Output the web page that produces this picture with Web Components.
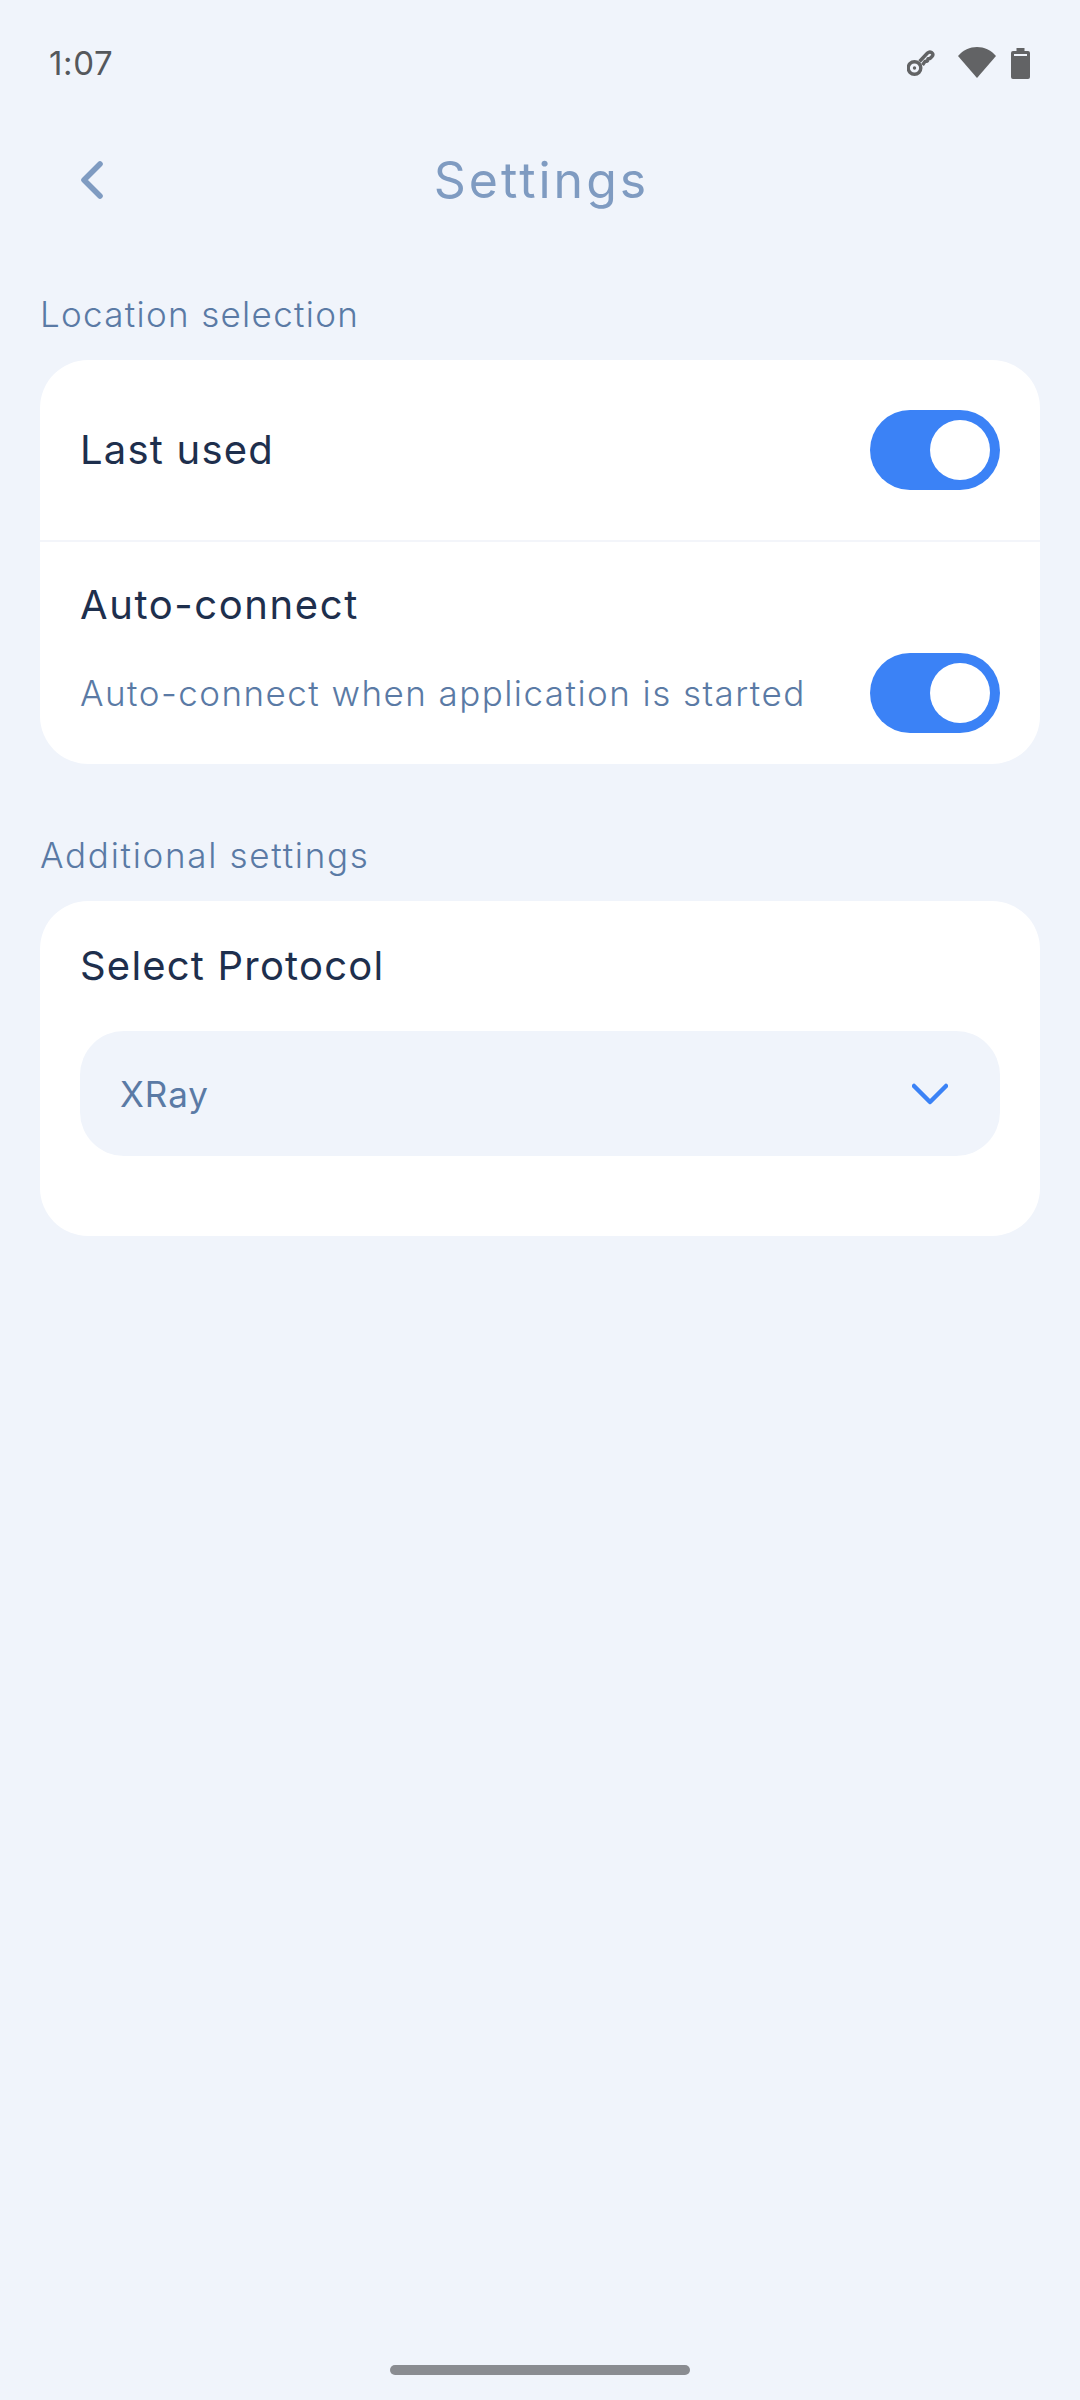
<!DOCTYPE html>
<html>
<head>
<meta charset="utf-8">
<title>Settings</title>
<style>
    html, body {
        margin: 0;
        padding: 0;
        background: #F0F4FB;
        font-family: "Inter", "Noto Sans", sans-serif;
    }
</style>
</head>
<body>
<settings-screen>
    <status-bar slot="status" time="1:07"></status-bar>
    <top-bar slot="top">Settings</top-bar>

    <section-label>Location selection</section-label>
    <settings-card>
        <toggle-row title-text="Last used"></toggle-row>
        <toggle-row class="wide" title-text="Auto-connect" sub-text="Auto-connect when application is started"></toggle-row>
    </settings-card>

    <section-label class="second">Additional settings</section-label>
    <settings-card>
        <select-field label="Select Protocol" value="XRay"></select-field>
    </settings-card>
</settings-screen>

<script>
const screenTemplate = document.createElement('template');
screenTemplate.innerHTML = `
    <style>
        :host {
            display: flex;
            flex-direction: column;
            width: 1080px;
            height: 2400px;
            box-sizing: border-box;
            background: #F0F4FB;
            overflow: hidden;
        }
        .content {
            flex: 1;
            padding: 0 40px;
        }
        .handle {
            width: 300px;
            height: 10px;
            border-radius: 5px;
            background: #8A8C91;
            margin: 0 auto 25px;
        }
    </style>
    <slot name="status"></slot>
    <slot name="top"></slot>
    <div class="content"><slot></slot></div>
    <div class="handle"></div>
`;

class SettingsScreen extends HTMLElement {
    constructor () {
        super();
        this.attachShadow({ mode: 'open' }).appendChild(screenTemplate.content.cloneNode(true));
    }
}

const statusTemplate = document.createElement('template');
statusTemplate.innerHTML = `
    <style>
        :host {
            display: flex;
            align-items: center;
            justify-content: space-between;
            height: 126px;
            box-sizing: border-box;
            padding: 0 50px 0 49px;
        }
        .time {
            font-size: 33px;
            color: #55585C;
            letter-spacing: 0.6px;
        }
        .icons {
            display: flex;
            align-items: center;
            gap: 15px;
        }
        svg { display: block; }
    </style>
    <span class="time"></span>
    <div class="icons">
        <svg width="28" height="28" viewBox="0 0 28 28" style="margin-right:8px">
            <circle cx="7.5" cy="19" r="6.3" fill="none" stroke="#626365" stroke-width="3.4"/>
            <circle cx="7.5" cy="19" r="1.7" fill="#626365"/>
            <path d="M12.5 12.5 L20.5 4 Q22.5 2.2 24.5 3.5 L25.5 4.5 Q26.5 6 25 7.5 L23 9.5 L21 9.7 L20.5 12 L18 12.5 L15.5 16" fill="none" stroke="#626365" stroke-width="3.4" stroke-linejoin="round"/>
        </svg>
        <svg width="38" height="31" viewBox="0 0 38 31" style="margin-bottom:1px">
            <path d="M19 31 L0 9 C5 3 12 0 19 0 C26 0 33 3 38 9 Z" fill="#626365"/>
        </svg>
        <svg width="19" height="31" viewBox="0 0 19 31">
            <path d="M5.5 0 H13.5 V3 H17 Q19 3 19 5 V29 Q19 31 17 31 H2 Q0 31 0 29 V5 Q0 3 2 3 H5.5 Z" fill="#626365"/>
            <rect x="3" y="6" width="13" height="2" fill="#F0F4FB"/>
        </svg>
    </div>
`;

class StatusBar extends HTMLElement {
    constructor () {
        super();
        this.attachShadow({ mode: 'open' }).appendChild(statusTemplate.content.cloneNode(true));
    }

    connectedCallback() {
        this.shadowRoot.querySelector('.time').textContent = this.getAttribute('time');
    }
}

const topTemplate = document.createElement('template');
topTemplate.innerHTML = `
    <style>
        :host {
            display: grid;
            grid-template-columns: 80px 1fr 80px;
            align-items: center;
            height: 108px;
            padding: 0 0 0 40px;
            width: 1000px;
            color: #7F9BC1;
        }
        .title {
            text-align: center;
            font-size: 50px;
            font-weight: 400;
            letter-spacing: 3px;
            padding-left: 3px;
        }
        svg { display: block; margin-left: 37px; }
    </style>
    <svg width="28" height="42" viewBox="0 0 28 42">
        <path d="M23 5 L7 21 L23 37" fill="none" stroke="#7F9BC1" stroke-width="5.6" stroke-linecap="round" stroke-linejoin="round"/>
    </svg>
    <div class="title"><slot></slot></div>
    <span></span>
`;

class TopBar extends HTMLElement {
    constructor () {
        super();
        this.attachShadow({ mode: 'open' }).appendChild(topTemplate.content.cloneNode(true));
    }
}

const labelTemplate = document.createElement('template');
labelTemplate.innerHTML = `
    <style>
        :host {
            display: block;
            font-size: 35px;
            font-weight: 300;
            color: #5A7AA5;
            letter-spacing: 1.3px;
            height: 42px;
            line-height: 42px;
            margin-top: 59px;
            margin-bottom: 25px;
        }
        :host(.second) {
            margin-top: 70px;
            letter-spacing: 1.7px;
        }
    </style>
    <slot></slot>
`;

class SectionLabel extends HTMLElement {
    constructor () {
        super();
        this.attachShadow({ mode: 'open' }).appendChild(labelTemplate.content.cloneNode(true));
    }
}

const cardTemplate = document.createElement('template');
cardTemplate.innerHTML = `
    <style>
        :host {
            display: block;
            background: #FFFFFF;
            border-radius: 48px;
            overflow: hidden;
        }
    </style>
    <slot></slot>
`;

class SettingsCard extends HTMLElement {
    constructor () {
        super();
        this.attachShadow({ mode: 'open' }).appendChild(cardTemplate.content.cloneNode(true));
    }
}

const toggleTemplate = document.createElement('template');
toggleTemplate.innerHTML = `
    <style>
        :host {
            display: flex;
            align-items: center;
            justify-content: space-between;
            box-sizing: border-box;
            height: 180px;
            padding: 0 40px;
        }
        :host(.wide) {
            height: 224px;
            align-items: flex-end;
            padding-bottom: 31px;
            border-top: 2px solid #F3F5FA;
        }
        .title {
            font-size: 40px;
            line-height: 48px;
            color: #1E2F4D;
            letter-spacing: 1.2px;
        }
        :host(.wide) .title {
            margin-bottom: 24px;
            letter-spacing: 1.6px;
        }
        .sub {
            font-size: 35px;
            font-weight: 300;
            color: #5A7AA5;
            letter-spacing: 1.45px;
            line-height: 80px;
            white-space: nowrap;
        }
        .sub:empty { display: none; }
        .switch {
            flex: none;
            display: flex;
            justify-content: flex-end;
            align-items: center;
            width: 130px;
            height: 80px;
            box-sizing: border-box;
            padding-right: 10px;
            border-radius: 40px;
            background: #3B82F6;
        }
        .knob {
            width: 60px;
            height: 60px;
            border-radius: 50%;
            background: #FFFFFF;
        }
    </style>
    <div class="text">
        <div class="title"></div>
        <div class="sub"></div>
    </div>
    <div class="switch"><div class="knob"></div></div>
`;

class ToggleRow extends HTMLElement {
    constructor () {
        super();
        this.attachShadow({ mode: 'open' }).appendChild(toggleTemplate.content.cloneNode(true));
    }

    connectedCallback() {
        this.shadowRoot.querySelector('.title').textContent = this.getAttribute('title-text');
        this.shadowRoot.querySelector('.sub').textContent = this.getAttribute('sub-text') || '';
    }
}

const selectTemplate = document.createElement('template');
selectTemplate.innerHTML = `
    <style>
        :host {
            display: block;
            box-sizing: border-box;
            height: 335px;
            padding: 41px 40px 0;
        }
        .label {
            font-size: 40px;
            line-height: 48px;
            color: #1E2F4D;
            letter-spacing: 1.2px;
            margin-bottom: 41px;
        }
        .field {
            display: flex;
            align-items: center;
            justify-content: space-between;
            height: 125px;
            box-sizing: border-box;
            padding: 0 52px 0 40px;
            border-radius: 44px;
            background: #F0F4FB;
            font-size: 35px;
            color: #5A7AA5;
            letter-spacing: 1px;
        }
        svg { display: block; }
    </style>
    <div class="label"></div>
    <div class="field">
        <span class="value"></span>
        <svg width="36" height="22" viewBox="0 0 36 22">
            <path d="M2 3 L18 19 L34 3" fill="none" stroke="#3B82F6" stroke-width="4.5" stroke-linecap="round" stroke-linejoin="round"/>
        </svg>
    </div>
`;

class SelectField extends HTMLElement {
    constructor () {
        super();
        this.attachShadow({ mode: 'open' }).appendChild(selectTemplate.content.cloneNode(true));
    }

    connectedCallback() {
        this.shadowRoot.querySelector('.label').textContent = this.getAttribute('label');
        this.shadowRoot.querySelector('.value').textContent = this.getAttribute('value');
    }
}

customElements.define('settings-screen', SettingsScreen);
customElements.define('status-bar', StatusBar);
customElements.define('top-bar', TopBar);
customElements.define('section-label', SectionLabel);
customElements.define('settings-card', SettingsCard);
customElements.define('toggle-row', ToggleRow);
customElements.define('select-field', SelectField);
</script>
</body>
</html>
